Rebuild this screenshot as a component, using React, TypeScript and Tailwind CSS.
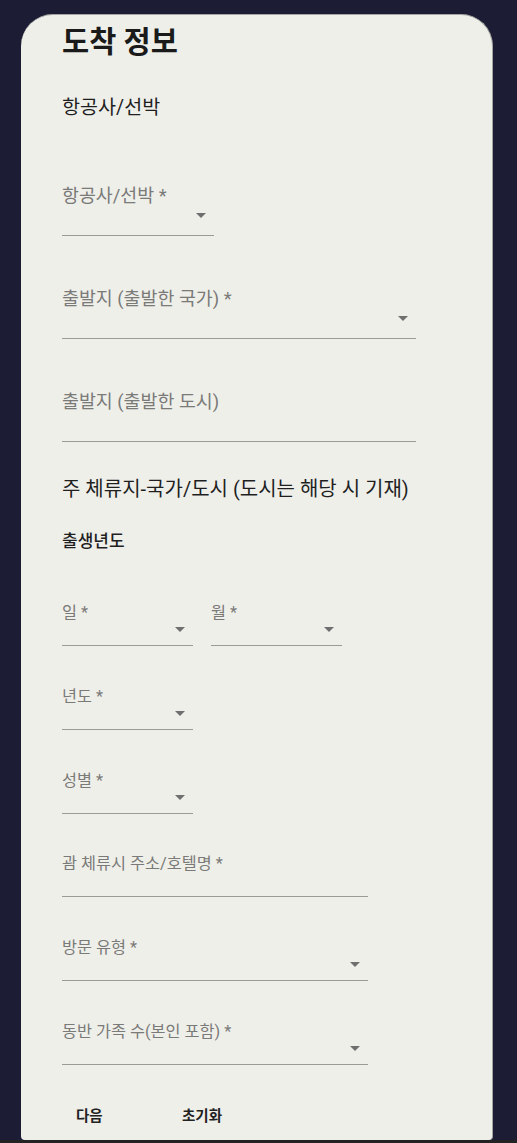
import React from "react";

const font = { fontFamily: "Roboto, 'Noto Sans CJK KR', 'Noto Sans', sans-serif" };

function Arrow() {
  return (
    <svg width="10" height="5" viewBox="0 0 10 5" className="block">
      <path d="M0 0 L10 0 L5 5 Z" fill="#6f6f6f" />
    </svg>
  );
}

// Big field: 18px label, used in the upper part of the form
function BigField({ label, width, select }: { label: string; width: string; select?: boolean }) {
  return (
    <div className={width}>
      <div className="text-[18.4px] leading-[24px] text-[#7a7a78]">{label}</div>
      <div className="flex h-[28px] items-start justify-end border-b border-[#9a9a96] pr-[8px] pt-[5px]">
        {select && <Arrow />}
      </div>
    </div>
  );
}

// Small field: 16px label, used below 출생년도
function SmallField({ label, width, select }: { label: string; width: string; select?: boolean }) {
  return (
    <div className={width}>
      <div className="text-[16.3px] leading-[22px] text-[#7a7a78]">{label}</div>
      <div className="flex h-[22px] items-start justify-end border-b border-[#9a9a96] pr-[8px] pt-[3px]">
        {select && <Arrow />}
      </div>
    </div>
  );
}

export default function App() {
  return (
    <div className="flex h-[1143px] w-[517px] flex-col overflow-hidden bg-[#1c1d35]" style={font}>
      <div className="ml-[21px] mt-[14px] h-[1126px] w-[472px] rounded-t-[32px] rounded-b-[4px] border-r border-t border-[#a4a4a0] bg-[#efefea] pl-[41px] pt-[9px]">
        <h1 className="text-[29.5px] font-bold leading-[36px] text-[#1a1a1a]">도착 정보</h1>
        <div className="mt-[34px] text-[19.6px] leading-[28px] text-[#1f1f1f]">항공사/선박</div>

        <div className="mt-[62px]">
          <BigField label="항공사/선박 *" width="w-[152px]" select />
        </div>
        <div className="mt-[51px]">
          <BigField label="출발지 (출발한 국가) *" width="w-[354px]" select />
        </div>
        <div className="mt-[51px]">
          <BigField label="출발지 (출발한 도시)" width="w-[354px]" />
        </div>

        <div className="mt-[35px] text-[20px] leading-[24px] text-[#1f1f1f]">
          주 체류지-국가/도시 (도시는 해당 시 기재)
        </div>
        <div className="mt-[28px] text-[17px] font-medium leading-[24px] text-[#1f1f1f]">출생년도</div>

        <div className="mt-[49px] flex gap-[18px]">
          <SmallField label="일 *" width="w-[131px]" select />
          <SmallField label="월 *" width="w-[131px]" select />
        </div>
        <div className="mt-[40px]">
          <SmallField label="년도 *" width="w-[131px]" select />
        </div>
        <div className="mt-[40px]">
          <SmallField label="성별 *" width="w-[131px]" select />
        </div>
        <div className="mt-[39px]">
          <SmallField label="괌 체류시 주소/호텔명 *" width="w-[306px]" />
        </div>
        <div className="mt-[40px]">
          <SmallField label="방문 유형 *" width="w-[306px]" select />
        </div>
        <div className="mt-[40px]">
          <SmallField label="동반 가족 수(본인 포함) *" width="w-[306px]" select />
        </div>

        <div className="mt-[42px] flex text-[14.5px] font-bold leading-[20px] text-[#222222]">
          <button className="w-[120px] pl-[14px] text-left">다음</button>
          <button className="text-left">초기화</button>
        </div>
      </div>
      <div className="h-[3px] bg-[#232323]" />
    </div>
  );
}
